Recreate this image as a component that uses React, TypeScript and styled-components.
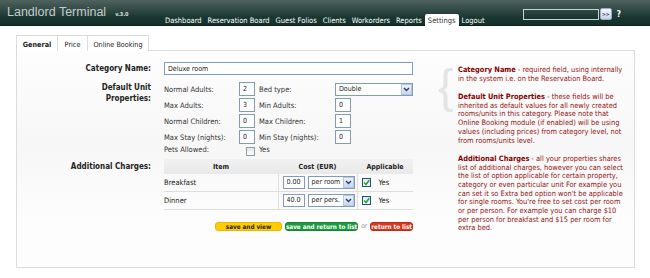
import React from 'react';
import styled, { createGlobalStyle } from 'styled-components';

const GlobalStyle = createGlobalStyle`
  html, body {
    margin: 0;
    padding: 0;
    background: #fff;
  }
  body {
    font-family: "DejaVu Sans Condensed", "DejaVu Sans", sans-serif;
    font-size: 7.5px;
    color: #333;
  }
`;

const navItems = ['Dashboard', 'Reservation Board', 'Guest Folios', 'Clients', 'Workorders', 'Reports', 'Settings', 'Logout'];
const tabs = [
  { label: 'General', width: 42 },
  { label: 'Price', width: 31 },
  { label: 'Online Booking', width: 62 },
];

const ArrowIcon = () => (
  <svg width="7" height="5" viewBox="0 0 7 5">
    <path d="M1 1 L3.5 3.5 L6 1" fill="none" stroke="#2d3f66" strokeWidth="1.4" />
  </svg>
);

const CheckIcon = () => (
  <svg width="7" height="7" viewBox="0 0 7 7">
    <path d="M1 3.5 L3 5.5 L6.2 1.2" fill="none" stroke="#21a131" strokeWidth="1.5" />
  </svg>
);

const App = () => {
  return (
    <>
      <GlobalStyle />
      <Header>
        <Logo>
          Landlord Terminal<Version>v.3.0</Version>
        </Logo>
        <Nav>
          {navItems.map((item) => (
            <NavItem key={item} $active={item === 'Settings'}>
              {item}
            </NavItem>
          ))}
        </Nav>
        <Search>
          <SearchInput />
          <SearchButton>&gt;&gt;</SearchButton>
          <Help>?</Help>
        </Search>
      </Header>

      <Main>
        <Tabs>
          {tabs.map((tab) => (
            <Tab key={tab.label} $active={tab.label === 'General'} $width={tab.width}>
              {tab.label}
            </Tab>
          ))}
        </Tabs>
        <Panel>
          <Form>
            <Label>Category Name:</Label>
            <TextInput $width={249} defaultValue="Deluxe room" />

            <Label $top>
              Default Unit
              <br />
              Properties:
            </Label>
            <PropsGrid>
              <FieldLabel>Normal Adults:</FieldLabel>
              <SmallInput defaultValue="2" />
              <FieldLabel $second>Bed type:</FieldLabel>
              <Select $width={78}>
                <span>Double</span>
                <SelectArrow>
                  <ArrowIcon />
                </SelectArrow>
              </Select>

              <FieldLabel>Max Adults:</FieldLabel>
              <SmallInput defaultValue="3" />
              <FieldLabel $second>Min Adults:</FieldLabel>
              <SmallInput defaultValue="0" />

              <FieldLabel>Normal Children:</FieldLabel>
              <SmallInput defaultValue="0" />
              <FieldLabel $second>Max Children:</FieldLabel>
              <SmallInput defaultValue="1" />

              <FieldLabel>Max Stay (nights):</FieldLabel>
              <SmallInput defaultValue="0" />
              <FieldLabel $second>Min Stay (nights):</FieldLabel>
              <SmallInput defaultValue="0" />

              <FieldLabel>Pets Allowed:</FieldLabel>
              <CheckWrap>
                <Checkbox />
              </CheckWrap>
              <FieldLabel $second>Yes</FieldLabel>
            </PropsGrid>

            <Label $line={15}>Additional Charges:</Label>
            <Charges>
              <thead>
                <tr>
                  <HeadCell $width={114}>Item</HeadCell>
                  <HeadCell $width={79}>Cost (EUR)</HeadCell>
                  <HeadCell $width={56}>Applicable</HeadCell>
                </tr>
              </thead>
              <tbody>
                {[
                  { name: 'Breakfast', cost: '0.00', unit: 'per room' },
                  { name: 'Dinner', cost: '40.00', unit: 'per pers.' },
                ].map((row) => (
                  <tr key={row.name}>
                    <Cell>{row.name}</Cell>
                    <Cell $divided>
                      <CostBox>
                        <TextInput $width={22} defaultValue={row.cost} />
                        <Select $width={47}>
                          <span>{row.unit}</span>
                          <SelectArrow>
                            <ArrowIcon />
                          </SelectArrow>
                        </Select>
                      </CostBox>
                    </Cell>
                    <Cell $divided>
                      <CostBox>
                        <Checkbox $checked>
                          <CheckIcon />
                        </Checkbox>
                        <YesText>Yes</YesText>
                      </CostBox>
                    </Cell>
                  </tr>
                ))}
              </tbody>
            </Charges>

            <span />
            <Buttons>
              <Button $variant="yellow" $width={76}>save and view</Button>
              <Button $variant="green" $width={77}>save and return to list</Button>
              <Or>or</Or>
              <Button $variant="red" $width={47}>return to list</Button>
            </Buttons>
          </Form>

          <HelpBox>
            <Brace>{'{'}</Brace>
            <HelpText>
              <p>
                <b>Category Name</b> - required field, using internally in the system i.e. on the Reservation Board.
              </p>
              <p>
                <b>Default Unit Properties</b> - these fields will be inherited as default values for all newly created
                rooms/units in this category. Please note that Online Booking module (if enabled) will be using values
                (including prices) from category level, not from rooms/units level.
              </p>
              <p>
                <b>Additional Charges</b> - all your properties shares list of additional charges, however you can
                select the list of option applicable for certain property, category or even particular unit For
                example you can set it so Extra bed option won't be applicable for single rooms. You're free to set
                cost per room or per person. For example you can charge $10 per person for breakfast and $15 per room
                for extra bed.
              </p>
            </HelpText>
          </HelpBox>
        </Panel>
      </Main>
    </>
  );
};

export default App;

const Header = styled.header`
  display: flex;
  height: 26px;
  box-sizing: border-box;
  background: linear-gradient(#50625e, #1a3631 70%, #13302b);
  border-bottom: 1px solid #0a1d19;
`;

const Logo = styled.div`
  display: flex;
  align-items: baseline;
  padding: 5px 0 0 7px;
  width: 155px;
  font-family: "Liberation Sans Narrow", "Liberation Sans", sans-serif;
  font-size: 12.5px;
  color: #c3cdc9;
  white-space: nowrap;
`;

const Version = styled.span`
  margin-left: 9px;
  font-family: "DejaVu Sans Condensed", "DejaVu Sans", sans-serif;
  font-size: 5.5px;
  font-weight: bold;
  color: #d8dedc;
`;

const Nav = styled.nav`
  display: flex;
  align-self: flex-end;
  margin-bottom: -1px;
`;

const NavItem = styled.a<{ $active?: boolean }>`
  display: block;
  height: 12px;
  line-height: 13px;
  padding: 0 3px;
  color: ${(props) => (props.$active ? '#333' : '#fff')};
  background: ${(props) => (props.$active ? '#fff' : 'transparent')};
  border-radius: 2px 2px 0 0;
  white-space: nowrap;
`;

const Search = styled.div`
  display: flex;
  align-items: center;
  margin-left: auto;
  margin-right: 29px;
  padding-top: 8px;
  align-self: flex-start;
`;

const SearchInput = styled.div`
  width: 76px;
  height: 11px;
  box-sizing: border-box;
  border: 1px solid #c9d2ce;
`;

const SearchButton = styled.div`
  width: 12px;
  height: 12px;
  margin-left: 1px;
  box-sizing: border-box;
  border: 1px solid #9aaac0;
  border-radius: 2px;
  background: linear-gradient(#f4f7fb, #c8d4e6);
  color: #1e2f55;
  font-size: 5px;
  font-weight: bold;
  line-height: 10px;
  text-align: center;
`;

const Help = styled.span`
  margin-left: 5px;
  color: #fff;
  font-size: 8px;
  font-weight: bold;
`;

const Main = styled.main`
  padding: 9px 15px 0 16px;
`;

const Tabs = styled.div`
  display: flex;
`;

const Tab = styled.div<{ $active?: boolean; $width: number }>`
  width: ${(props) => props.$width}px;
  height: 16px;
  box-sizing: border-box;
  line-height: 17px;
  text-align: center;
  margin-right: -1px;
  margin-bottom: -1px;
  border: 1px solid #dcdcdc;
  border-bottom: none;
  background: #fff;
  color: #222;
  font-size: 7.2px;
  font-weight: ${(props) => (props.$active ? 'bold' : 'normal')};
  white-space: nowrap;
  position: relative;
  z-index: ${(props) => (props.$active ? 1 : 0)};
`;

const Panel = styled.section`
  display: flex;
  height: 218px;
  box-sizing: border-box;
  border: 1px solid #dcdcdc;
  background: linear-gradient(#fdfdfd, #f7f7f7 45%, #fdfdfd 80%);
`;

const Form = styled.div`
  display: grid;
  grid-template-columns: 134px 249px;
  grid-template-rows: 13px 76px 47px 9px;
  column-gap: 13px;
  row-gap: 6px;
  align-content: start;
  width: 420px;
  padding-top: 11px;
  & > :nth-child(5), & > :nth-child(6) {
    margin-top: -4px;
  }
  & > :nth-child(7), & > :nth-child(8) {
    margin-top: 10px;
  }
`;

const Label = styled.div<{ $top?: boolean; $line?: number }>`
  text-align: right;
  font-weight: bold;
  font-size: 8px;
  color: #222;
  line-height: ${(props) => (props.$line ? `${props.$line}px` : props.$top ? '11px' : '13px')};
  padding-top: ${(props) => (props.$top ? '1px' : '0')};
`;

const TextInput = styled.input<{ $width: number }>`
  width: ${(props) => props.$width}px;
  height: 13px;
  box-sizing: border-box;
  border: 1px solid #7f9db9;
  background: #fff;
  padding: 0 3px;
  font-family: inherit;
  font-size: 7px;
  color: #222;
  outline: none;
`;

const SmallInput = styled(TextInput).attrs({ $width: 16 })`
  height: 14px;
`;

const PropsGrid = styled.div`
  display: grid;
  grid-template-columns: 75px 16px 80px 78px;
  grid-auto-rows: 16px;
  align-items: center;
  & > :nth-last-child(-n + 3) {
    align-self: start;
  }
`;

const FieldLabel = styled.span<{ $second?: boolean }>`
  padding-left: ${(props) => (props.$second ? '4px' : '0')};
  color: #333;
  white-space: nowrap;
`;

const Select = styled.div<{ $width: number }>`
  display: flex;
  align-items: center;
  justify-content: space-between;
  width: ${(props) => props.$width}px;
  height: 13px;
  box-sizing: border-box;
  border: 1px solid #7f9db9;
  background: #fff;
  padding-left: 3px;
  font-size: 7px;
  color: #222;
  white-space: nowrap;
  overflow: hidden;
`;

const SelectArrow = styled.div`
  display: flex;
  align-items: center;
  justify-content: center;
  flex: none;
  width: 11px;
  height: 11px;
  box-sizing: border-box;
  border: 1px solid #b8c6e4;
  background: linear-gradient(#eef2fb, #c9d5ef);
`;

const CheckWrap = styled.div`
  display: flex;
  justify-content: flex-end;
  padding-top: 2px;
`;

const Checkbox = styled.div<{ $checked?: boolean }>`
  display: flex;
  align-items: center;
  justify-content: center;
  width: 9px;
  height: 9px;
  box-sizing: border-box;
  border: 1px solid ${(props) => (props.$checked ? '#1c5180' : '#8b9bab')};
  background: linear-gradient(#e6e6e0, #fff);
`;

const Charges = styled.table`
  width: 249px;
  border-collapse: collapse;
  table-layout: fixed;
`;

const HeadCell = styled.th<{ $width: number }>`
  width: ${(props) => props.$width}px;
  height: 15px;
  padding: 0;
  background: linear-gradient(#f1f1f1, #e9e9e9);
  font-weight: bold;
  font-size: 7px;
  color: #222;
  text-align: center;
`;

const Cell = styled.td<{ $divided?: boolean }>`
  height: 15px;
  padding: 0 0 0 ${(props) => (props.$divided ? '4px' : '0')};
  border-bottom: 1px solid #dedede;
  border-left: ${(props) => (props.$divided ? '1px solid #dedede' : 'none')};
  color: #222;
  white-space: nowrap;
`;

const CostBox = styled.div`
  display: flex;
  align-items: center;
  gap: 3px;
`;

const YesText = styled.span`
  margin-left: 5px;
`;

const Buttons = styled.div`
  display: flex;
  align-items: center;
  gap: 3px;
  margin-left: 51px;
`;

const buttonColors = {
  yellow: { bg: '#ffcc00', border: '#e8b800', color: '#222' },
  green: { bg: '#1d9a3e', border: '#178232', color: '#fff' },
  red: { bg: '#d8351e', border: '#bd2a16', color: '#fff' },
};

const Button = styled.button<{ $variant: keyof typeof buttonColors; $width: number }>`
  width: ${(props) => props.$width}px;
  height: 9px;
  padding: 0;
  border: 1px solid ${(props) => buttonColors[props.$variant].border};
  border-radius: 3px;
  background: ${(props) => buttonColors[props.$variant].bg};
  color: ${(props) => buttonColors[props.$variant].color};
  font-family: inherit;
  font-size: 6.3px;
  font-weight: bold;
  line-height: 7px;
  white-space: nowrap;
`;

const Or = styled.span`
  color: #999;
  font-size: 6.5px;
`;

const HelpBox = styled.aside`
  display: flex;
  padding-top: 12px;
`;

const Brace = styled.div`
  width: 20px;
  margin-left: 1px;
  font-family: "Liberation Sans", sans-serif;
  font-size: 46px;
  line-height: 46px;
  color: #e4e4e4;
`;

const HelpText = styled.div`
  width: 168px;
  padding-top: 3px;
  color: #931313;
  font-size: 7.4px;
  line-height: 8.7px;
  & p {
    margin: 0 0 9.6px;
  }
  & b {
    color: #850000;
  }
`;
